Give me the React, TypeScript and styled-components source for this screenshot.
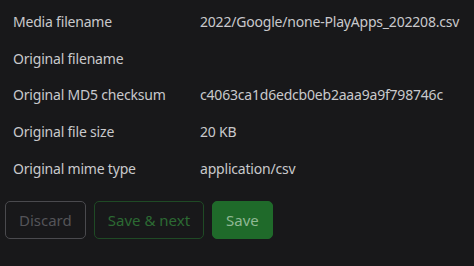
import React from "react";
import styled, { createGlobalStyle } from "styled-components";

const Global = createGlobalStyle`
  html, body { margin: 0; padding: 0; background: #18181a; }
  body { font-family: "Noto Sans", "Open Sans", sans-serif; }
`;

const Page = styled.div`
  width: 474px;
  height: 266px;
  background: #18181a;
  padding: 3px 5px 0 5px;
  box-sizing: border-box;
  overflow: hidden;
`;

const Table = styled.div`
  display: grid;
  grid-template-columns: 195px 1fr;
  grid-auto-rows: 36.75px;
  align-items: center;
  color: #c9c9cc;
  font-size: 14px;
  letter-spacing: -0.2px;
`;

const Label = styled.div`
  padding-left: 8px;
  white-space: nowrap;
`;

const Value = styled.div`
  white-space: nowrap;
`;

const Actions = styled.div`
  display: flex;
  gap: 8px;
  margin-top: 14px;
`;

const Button = styled.button<{ $variant: "neutral" | "outline" | "solid" }>`
  height: 38px;
  padding: 0 13px;
  border-radius: 5px;
  font-family: inherit;
  font-size: 15px;
  box-sizing: border-box;
  border: 1px solid
    ${(p) => (p.$variant === "neutral" ? "#4a4a4e" : p.$variant === "outline" ? "#1f4a25" : "#1f6a2a")};
  background: ${(p) => (p.$variant === "solid" ? "#1f6a2a" : "transparent")};
  color: ${(p) => (p.$variant === "neutral" ? "#545458" : p.$variant === "outline" ? "#2c6a33" : "#8fb894")};
`;

const rows: [string, string][] = [
  ["Media filename", "2022/Google/none-PlayApps_202208.csv"],
  ["Original filename", ""],
  ["Original MD5 checksum", "c4063ca1d6edcb0eb2aaa9a9f798746c"],
  ["Original file size", "20 KB"],
  ["Original mime type", "application/csv"],
];

export default function App() {
  return (
    <Page>
      <Global />
      <Table>
        {rows.map(([l, v]) => (
          <React.Fragment key={l}>
            <Label>{l}</Label>
            <Value>{v}</Value>
          </React.Fragment>
        ))}
      </Table>
      <Actions>
        <Button $variant="neutral">Discard</Button>
        <Button $variant="outline">Save &amp; next</Button>
        <Button $variant="solid">Save</Button>
      </Actions>
    </Page>
  );
}
